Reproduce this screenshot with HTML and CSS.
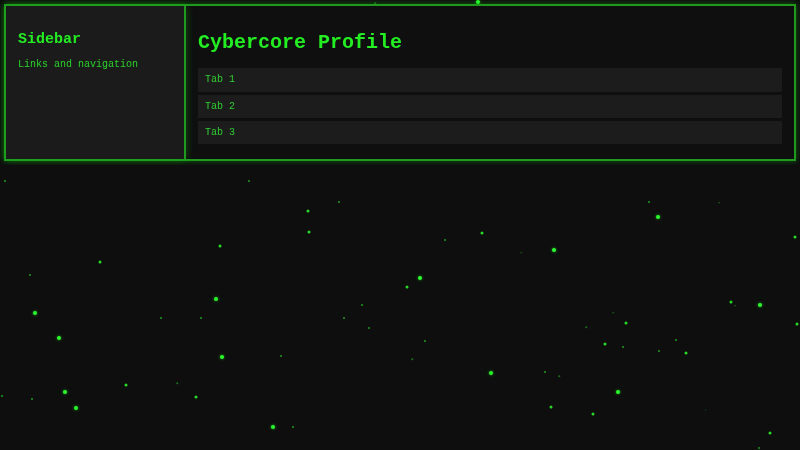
FILE: index.html
```html
<!DOCTYPE html>
<html lang="en">
  <head>
    <meta charset="UTF-8" />
    <meta name="viewport" content="width=device-width, initial-scale=1.0" />
    <title>Cybercore Profile</title>
    <link rel="stylesheet" href="styles.css">
  </head>
  <body>
    <div class="stars" id="stars"></div>
    <div class="wrapper">
      <aside class="sidebar">
        <h3>Sidebar</h3>
        <p>Links and navigation</p>
      </aside>
      <main class="content">
        <h2>Cybercore Profile</h2>
        <div class="tab">Tab 1</div>
        <div class="tab">Tab 2</div>
        <div class="tab">Tab 3</div>
      </main>
    </div>

    <script>
      // x, y, kind (b = bright, m = medium, s = small, t = tiny)
      const dots = [
        [4.7,180.7,"s"],[249,180.7,"s"],[339,201.7,"s"],[308,211,"m"],[309,231.7,"m"],
        [220,245.7,"m"],[100,262,"m"],[30,274.7,"s"],[215.7,298.7,"b"],[361.7,305,"s"],
        [649,202,"s"],[719,202.7,"t"],[657.7,216.7,"b"],[482,233,"m"],[445,239.7,"s"],
        [521,252.7,"t"],[554,250,"b"],[795,237,"m"],[420,278,"b"],[407,286.7,"m"],
        [731,301.7,"m"],[735,305.7,"t"],[759.7,304.7,"b"],
        [34.7,313.3,"b"],[161,318,"s"],[200.7,318,"s"],[343.7,317.7,"s"],[368.7,327.7,"s"],
        [59.3,338,"b"],[222.3,357,"b"],[280.7,355.7,"s"],[125.7,384.7,"m"],[177.3,383,"t"],
        [2.3,395.7,"s"],[32,398.7,"s"],[64.7,391.7,"b"],[76.3,408,"b"],[195.7,397.3,"m"],
        [273,427,"b"],[293.3,427,"s"],
        [797.3,324,"m"],[613,312.7,"t"],[586.3,327,"t"],[626,322.7,"m"],[425,340.7,"s"],
        [412.3,359,"t"],[605,344,"m"],[623,347,"s"],[676.3,340.3,"s"],[659,351.3,"s"],
        [686.3,353.3,"m"],[491.3,373.3,"b"],[545,372.3,"s"],[559,376.3,"t"],[618,391.7,"b"],
        [550.7,406.7,"m"],[593,414.3,"m"],[705.7,409.7,"t"],[770.3,433,"m"],[758.7,447.7,"s"],
        [375,3,"t"],[478,2,"b"],
      ];

      const stars = document.querySelector("#stars");
      for (let [x, y, kind] of dots) {
        let dot = document.createElement("span");
        dot.className = "dot " + kind;
        dot.style.left = x + "px";
        dot.style.top = y + "px";
        stars.appendChild(dot);
      }
    </script>
  </body>
</html>
```

FILE: styles.css
```css
* {
  margin: 0;
  padding: 0;
  box-sizing: border-box;
}
body {
  background-color: #0e0e0e;
  font-family: "Liberation Mono", "Courier New", monospace;
  color: #22ee22;
  padding: 4px;
}
.stars {
  position: fixed;
  inset: 0;
  z-index: 0;
}
.dot {
  position: absolute;
  border-radius: 50%;
  background-color: #2bff2b;
  transform: translate(-50%, -50%);
}
.dot.b {
  width: 4px;
  height: 4px;
  box-shadow: 0 0 3px rgba(40, 255, 40, 0.6);
}
.dot.m {
  width: 3px;
  height: 3px;
  opacity: 0.85;
}
.dot.s {
  width: 2px;
  height: 2px;
  opacity: 0.6;
}
.dot.t {
  width: 1.5px;
  height: 1.5px;
  opacity: 0.4;
}
.wrapper {
  position: relative;
  z-index: 1;
  display: flex;
  border: 2px solid #1f9a1f;
  background-color: #0f0f0f;
  box-shadow: 0 0 6px rgba(20, 200, 20, 0.45);
}
.sidebar {
  width: 180px;
  flex-shrink: 0;
  padding: 12px;
  background-color: #1b1b1b;
  border-right: 2px solid #1f9a1f;
  box-shadow: 0 0 8px rgba(20, 200, 20, 0.35);
}
.sidebar h3 {
  font-size: 15px;
  margin: 12.5px 0 11.9px;
  color: #22ee22;
}
.sidebar p {
  font-size: 10px;
  color: #2ad42a;
}
.content {
  flex: 1;
  padding: 12px;
}
.content h2 {
  font-size: 20px;
  margin: 13.3px 0 14px;
  color: #22ee22;
}
.tab {
  background-color: #1c1c1c;
  padding: 6.2px 7px;
  margin-bottom: 3px;
  font-size: 10px;
  color: #2fcf2f;
}
```
